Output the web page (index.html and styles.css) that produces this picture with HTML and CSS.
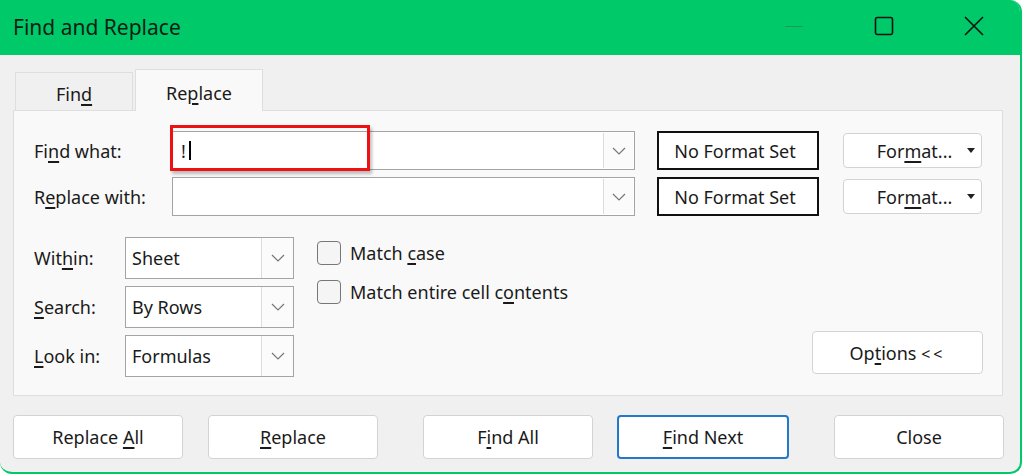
FILE: index.html
```html
<!DOCTYPE html>
<html lang="en">
<head>
    <meta charset="UTF-8">
    <title>Find and Replace</title>
    <link rel="stylesheet" href="styles.css">
</head>
<body>
    <div class="window">
        <div class="titlebar">
            <div class="title">Find and Replace</div>
            <div class="controls">
                <div class="ctl ctl-min"><svg width="20" height="20" viewBox="0 0 20 20"><path d="M1 10.5h18" stroke="#1f9a5a" stroke-width="1"/></svg></div>
                <div class="ctl ctl-max"><svg width="20" height="20" viewBox="0 0 20 20"><rect x="1.5" y="1.5" width="17" height="17" rx="2" fill="none" stroke="#111" stroke-width="1.6"/></svg></div>
                <div class="ctl ctl-close"><svg width="22" height="22" viewBox="0 0 22 22"><path d="M2 2L20 20M20 2L2 20" stroke="#111" stroke-width="1.6"/></svg></div>
            </div>
        </div>
        <div class="content">
            <div class="tabs">
                <div class="tab"><span>Fin<u>d</u></span></div>
                <div class="tab active"><span>Re<u>p</u>lace</span></div>
            </div>
            <div class="panel">
                <div class="row">
                    <label class="lbl">Fi<u>n</u>d what:</label>
                    <div class="combo">
                        <div class="combo-text">!<span class="caret"></span></div>
                        <div class="drop"><svg width="14" height="8" viewBox="0 0 14 8"><path d="M1 1l6 6 6-6" fill="none" stroke="#777" stroke-width="1.2"/></svg></div>
                        <div class="highlight"></div>
                    </div>
                    <div class="fmt-set">No Format Set</div>
                    <div class="btn fmt-btn"><span>For<u>m</u>at...</span><svg class="arrow" width="8" height="5" viewBox="0 0 8 5"><path d="M0 0h8L4 5z" fill="#222"/></svg></div>
                </div>
                <div class="row row2">
                    <label class="lbl">R<u>e</u>place with:</label>
                    <div class="combo">
                        <div class="combo-text"></div>
                        <div class="drop"><svg width="14" height="8" viewBox="0 0 14 8"><path d="M1 1l6 6 6-6" fill="none" stroke="#777" stroke-width="1.2"/></svg></div>
                    </div>
                    <div class="fmt-set">No Format Set</div>
                    <div class="btn fmt-btn"><span>For<u>m</u>at...</span><svg class="arrow" width="8" height="5" viewBox="0 0 8 5"><path d="M0 0h8L4 5z" fill="#222"/></svg></div>
                </div>
                <div class="lower">
                    <div class="opts">
                        <div class="opt-row">
                            <label class="opt-lbl">Wit<u>h</u>in:</label>
                            <div class="select"><span>Sheet</span><div class="sel-drop"><svg width="14" height="8" viewBox="0 0 14 8"><path d="M1 1l6 6 6-6" fill="none" stroke="#777" stroke-width="1.2"/></svg></div></div>
                        </div>
                        <div class="opt-row">
                            <label class="opt-lbl"><u>S</u>earch:</label>
                            <div class="select"><span>By Rows</span><div class="sel-drop"><svg width="14" height="8" viewBox="0 0 14 8"><path d="M1 1l6 6 6-6" fill="none" stroke="#777" stroke-width="1.2"/></svg></div></div>
                        </div>
                        <div class="opt-row">
                            <label class="opt-lbl"><u>L</u>ook in:</label>
                            <div class="select"><span>Formulas</span><div class="sel-drop"><svg width="14" height="8" viewBox="0 0 14 8"><path d="M1 1l6 6 6-6" fill="none" stroke="#777" stroke-width="1.2"/></svg></div></div>
                        </div>
                    </div>
                    <div class="checks">
                        <div class="check"><span class="box"></span><span>Match <u>c</u>ase</span></div>
                        <div class="check"><span class="box"></span><span>Match entire cell c<u>o</u>ntents</span></div>
                    </div>
                    <div class="spacer">
                        <div class="btn opt-btn"><span>Op<u>t</u>ions <span class="chev">&lt;&lt;</span></span></div>
                    </div>
                </div>
            </div>
            <div class="actions">
                <div class="btn act"><span>Replace <u>A</u>ll</span></div>
                <div class="btn act"><span><u>R</u>eplace</span></div>
                <div class="btn act act-gap"><span>F<u>i</u>nd All</span></div>
                <div class="btn act primary"><span><u>F</u>ind Next</span></div>
                <div class="btn act act-gap"><span>Close</span></div>
            </div>
        </div>
    </div>
</body>
</html>
```

FILE: styles.css
```css
html, body {
    margin: 0;
    padding: 0;
    background: #fff;
}
body {
    font-family: 'Noto Sans', 'Open Sans', sans-serif;
    font-size: 18px;
    color: #1a1a1a;
    width: 1024px;
    height: 474px;
    overflow: hidden;
}
u {
    text-decoration-thickness: 1.5px;
    text-underline-offset: 3px;
}
.window {
    width: 1022px;
    height: 474px;
    box-sizing: border-box;
    background: #f0f0f0;
    border-right: 2px solid #00c96a;
    border-bottom: 2px solid #00c96a;
    border-radius: 0 12px 12px 12px;
    overflow: hidden;
}
.titlebar {
    height: 55px;
    background: #00c96a;
    display: flex;
    align-items: center;
    justify-content: space-between;
}
.title {
    font-size: 21px;
    color: #0c1f14;
    padding-left: 13px;
    margin-top: -2px;
}
.controls {
    display: flex;
    align-items: center;
    margin-top: -4px;
}
.ctl {
    width: 90px;
    display: flex;
    justify-content: center;
}
.ctl-close { margin-right: 1px; }
.content {
    padding: 14px 0 0 13px;
}
.tabs {
    display: flex;
    align-items: flex-end;
    height: 41px;
    padding-left: 2px;
}
.tab {
    width: 118px;
    height: 38px;
    box-sizing: border-box;
    border: 1px solid #dedede;
    border-bottom: none;
    background: #f0f0f0;
    display: flex;
    align-items: center;
    justify-content: center;
    padding-top: 4px;
}
.tab.active {
    width: 128px;
    height: 42px;
    margin-left: 2px;
    background: #f9f9f9;
    position: relative;
    top: 1px;
    z-index: 1;
}
.panel {
    width: 990px;
    height: 286px;
    box-sizing: border-box;
    background: #f9f9f9;
    border: 1px solid #dedede;
    padding: 20px 19px 0 20px;
}
.row {
    display: flex;
    align-items: center;
    height: 39px;
}
.row2 {
    margin-top: 7px;
}
.lbl {
    width: 138px;
}
.combo {
    width: 463px;
    height: 39px;
    box-sizing: border-box;
    border: 1px solid #a4a4a4;
    background: #fff;
    display: flex;
    position: relative;
}
.combo-text {
    flex: 1;
    padding-left: 8px;
    display: flex;
    align-items: center;
}
.caret {
    display: inline-block;
    width: 2px;
    height: 19px;
    background: #000;
    margin-left: 3px;
}
.drop {
    width: 30px;
    height: 35px;
    margin: 1px;
    box-sizing: border-box;
    background: #fbfbfb;
    border-left: 1px solid #dcdcdc;
    display: flex;
    align-items: center;
    justify-content: center;
}
.highlight {
    position: absolute;
    left: -3px;
    top: -7px;
    width: 200px;
    height: 46px;
    box-sizing: border-box;
    border: 3px solid #ee1111;
    box-shadow: 2px 3px 3px rgba(0, 0, 0, 0.25);
}
.fmt-set {
    width: 162px;
    height: 39px;
    box-sizing: border-box;
    border: 2px solid #111;
    background: #fff;
    margin-left: 22px;
    display: flex;
    align-items: center;
    justify-content: center;
    padding-right: 6px;
}
.btn {
    background: #fff;
    border: 1px solid #d3d3d3;
    border-radius: 4px;
    box-sizing: border-box;
    display: flex;
    align-items: center;
    justify-content: center;
}
.fmt-btn {
    width: 139px;
    height: 35px;
    margin-left: 24px;
    position: relative;
    padding-left: 4px;
}
.arrow {
    position: absolute;
    right: 6px;
    top: 14px;
}
.lower {
    display: flex;
    margin-top: 21px;
}
.opts {
    display: flex;
    flex-direction: column;
    gap: 7px;
}
.opt-row {
    display: flex;
    align-items: center;
}
.opt-lbl {
    width: 91px;
}
.select {
    width: 169px;
    height: 42px;
    box-sizing: border-box;
    border: 1px solid #a4a4a4;
    background: #fff;
    display: flex;
    align-items: center;
}
.select span {
    flex: 1;
    padding-left: 6px;
}
.sel-drop {
    width: 31px;
    height: 40px;
    border-left: 1px solid #dcdcdc;
    background: #fbfbfb;
    display: flex;
    align-items: center;
    justify-content: center;
}
.checks {
    margin-left: 23px;
    padding-top: 4px;
    display: flex;
    flex-direction: column;
    gap: 15px;
}
.check {
    display: flex;
    align-items: center;
    height: 24px;
}
.box {
    width: 24px;
    height: 24px;
    box-sizing: border-box;
    border: 1.5px solid #777;
    border-radius: 4px;
    background: #f5f5f5;
    margin-right: 9px;
}
.spacer {
    flex: 1;
    display: flex;
    justify-content: flex-end;
    align-items: flex-end;
    padding-bottom: 3px;
}
.opt-btn {
    width: 171px;
    height: 43px;
}
.chev {
    font-size: 16px;
    letter-spacing: 3px;
}
.actions {
    display: flex;
    margin-top: 19px;
    gap: 25px;
}
.act {
    width: 170px;
    height: 44px;
}
.act-gap {
    margin-left: 20px;
}
.primary {
    width: 172px;
    border: 2px solid #2478cc;
    margin-left: -1px;
}
```
